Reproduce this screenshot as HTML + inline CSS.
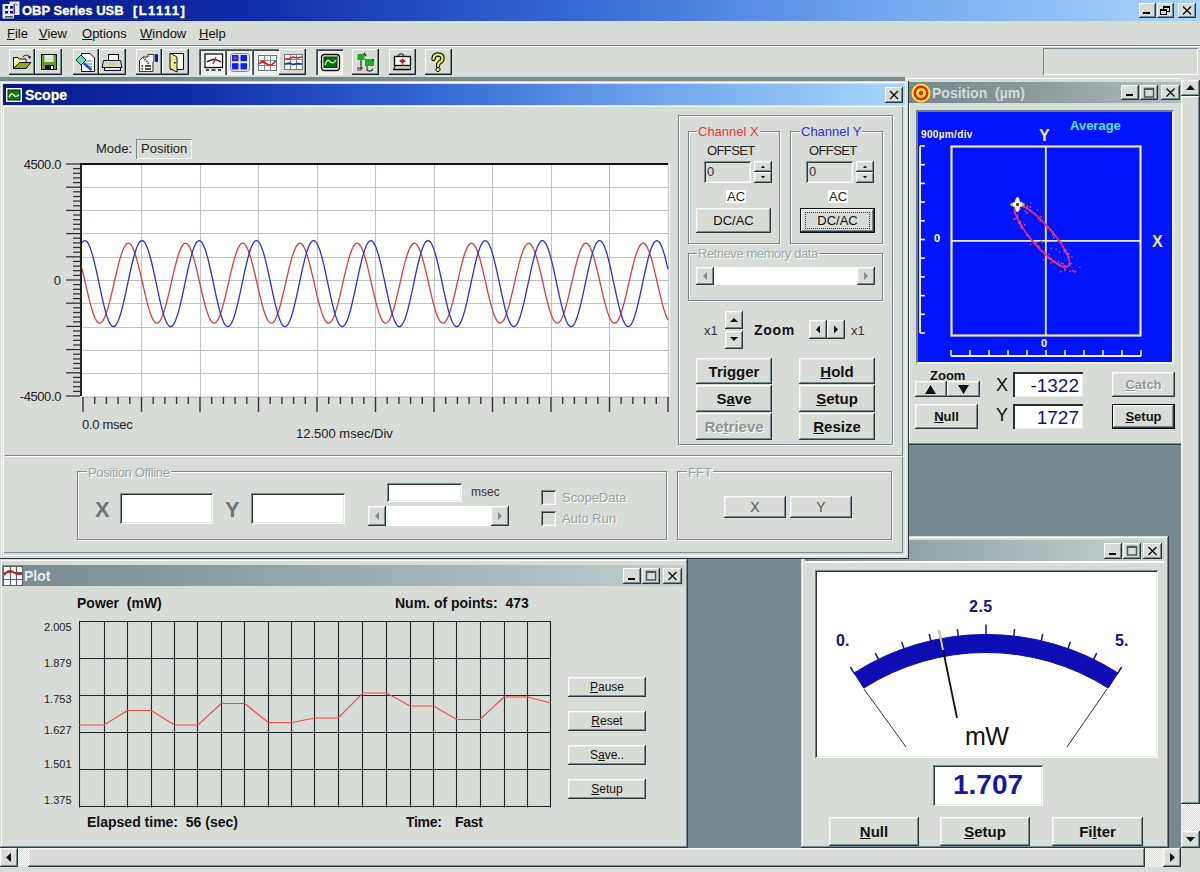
<!DOCTYPE html>
<html><head><meta charset="utf-8"><style>
*{box-sizing:border-box}
html,body{margin:0;padding:0}
body{width:1200px;height:872px;position:relative;overflow:hidden;background:#D8DCD6;font-family:"Liberation Sans",sans-serif;font-size:13px;color:#111}
.a{position:absolute}
.rb{position:absolute;background:#D8DCD6;box-shadow:inset -1px -1px #2C383C,inset 1px 1px #FAFBFA,inset -2px -2px #788A8F,inset 2px 2px #E6E8E4}
.sk{position:absolute;box-shadow:inset 1px 1px #788A8F,inset -1px -1px #FAFBFA,inset 2px 2px #2C383C,inset -2px -2px #E6E8E4}
.sk1{position:absolute;box-shadow:inset 1px 1px #788A8F,inset -1px -1px #FAFBFA}
.t{position:absolute;white-space:nowrap;line-height:1}
.tb{position:absolute;background:#D8DCD6;box-shadow:inset -1px -1px #2C383C,inset 1px 1px #FAFBFA,inset -2px -2px #788A8F}
.tb svg{position:absolute;left:0;top:0}
svg{overflow:visible}
u{text-decoration:underline;text-underline-offset:1px}
</style></head><body>
<div class="a" style="left:0px;top:0px;width:1200px;height:21px;background:linear-gradient(90deg,#0A1A8A 0%,#0E2CA8 20%,#3566D2 47%,#6FA4EC 72%,#A8D6FA 100%)"></div>
<svg class="a" style="left:0;top:0" width="22" height="21">
<rect x="9.5" y="1.5" width="10" height="13.5" fill="#EEE8F4"/><path d="M15 3 L18 6" stroke="#D89060" stroke-width="1.6"/><rect x="15" y="11" width="3" height="1.5" fill="#C8D8C0"/>
<rect x="2.5" y="4" width="11.5" height="14.5" fill="#E4E8F8"/><rect x="13.5" y="4" width="1.3" height="10" fill="#202A80"/>
<rect x="5" y="6" width="3" height="2.6" fill="#0A14B0"/><rect x="10" y="6" width="3" height="2.6" fill="#0A14B0"/>
<rect x="5" y="11" width="3" height="2.6" fill="#0A14B0"/><rect x="10" y="11" width="3" height="2.6" fill="#0A14B0"/>
<rect x="5" y="16" width="8" height="1.5" fill="#3E5A40"/></svg>
<div class="t" style="left:22px;top:4px;font-size:13px;color:#fff;font-weight:bold;-webkit-text-stroke:0.35px #fff">OBP Series USB</div>
<div class="t" style="left:133px;top:4px;font-size:13px;color:#fff;font-weight:bold;letter-spacing:1.4px;-webkit-text-stroke:0.35px #fff">[L1111]</div>
<div class="tb" style="left:1139px;top:3px;width:17px;height:15px"><svg width="17" height="15"><rect x="4" y="9" width="7" height="2" fill="#000"/></svg></div>
<div class="tb" style="left:1157px;top:3px;width:17px;height:15px"><svg width="17" height="15"><rect x="6.5" y="3.5" width="6" height="5" fill="none" stroke="#000"/><rect x="6" y="3" width="7" height="2" fill="#000"/><rect x="3.5" y="6.5" width="6" height="5" fill="#D8DCD6" stroke="#000"/><rect x="3" y="6" width="7" height="2" fill="#000"/></svg></div>
<div class="tb" style="left:1178px;top:3px;width:18px;height:15px"><svg width="18" height="15"><path d="M5.0 3.5 L13.0 11.5 M13.0 3.5 L5.0 11.5" stroke="#111" stroke-width="1.4"/></svg></div>
<div class="t" style="left:7px;top:27px;font-size:13px;color:#111;"><u>F</u>ile</div>
<div class="t" style="left:39px;top:27px;font-size:13px;color:#111;"><u>V</u>iew</div>
<div class="t" style="left:82px;top:27px;font-size:13px;color:#111;"><u>O</u>ptions</div>
<div class="t" style="left:140px;top:27px;font-size:13px;color:#111;"><u>W</u>indow</div>
<div class="t" style="left:199px;top:27px;font-size:13px;color:#111;"><u>H</u>elp</div>
<div class="a" style="left:0px;top:45px;width:1200px;height:1px;background:#788A8F"></div>
<div class="a" style="left:0px;top:46px;width:1200px;height:1px;background:#FAFBFA"></div>
<div class="sk1" style="left:1043px;top:48px;width:155px;height:27px;"></div>
<div class="a" style="left:0px;top:77px;width:1181px;height:771px;background:#778A90"></div>
<div class="a" style="left:9px;top:49px;width:26px;height:26px;background:#D8DCD6;box-shadow:inset -1px -1px #1A2428,inset -2px -2px #788A8F,inset 1px 1px #FAFBFA"></div>
<svg class="a" style="left:9px;top:49px" width="26" height="26" viewBox="0 0 26 26"><path d="M4.5 8.5 L9 8.5 L10 10 L17 10 L17 19.5 L4.5 19.5Z" fill="#F2F2A8" stroke="#111"/><path d="M4.5 19.5 L10.5 13.5 L22 13.5 L17 19.5Z" fill="#88A820" stroke="#111"/><path d="M14 8 Q17 4 20.5 8" stroke="#333" stroke-width="1.2" fill="none"/><path d="M22 7 L21 10 L19 8Z" fill="#111"/></svg>
<div class="a" style="left:35px;top:49px;width:27px;height:26px;background:#D8DCD6;box-shadow:inset -1px -1px #1A2428,inset -2px -2px #788A8F,inset 1px 1px #FAFBFA"></div>
<svg class="a" style="left:35px;top:49px" width="27" height="26" viewBox="0 0 27 26"><rect x="6.5" y="5.5" width="15" height="15" fill="#6E9A20" stroke="#111"/><rect x="9.5" y="6" width="9" height="7" fill="#E2E6E2"/><rect x="10" y="16" width="9" height="5" fill="#111"/><rect x="16" y="17" width="2" height="3" fill="#fff"/></svg>
<div class="a" style="left:73px;top:49px;width:26px;height:26px;background:#D8DCD6;box-shadow:inset -1px -1px #1A2428,inset -2px -2px #788A8F,inset 1px 1px #FAFBFA"></div>
<svg class="a" style="left:73px;top:49px" width="26" height="26" viewBox="0 0 26 26"><path d="M8.5 4.5 L17 4.5 L21.5 9 L21.5 22.5 L8.5 22.5Z" fill="#fff" stroke="#111"/><path d="M13 12 H19 M13 15 H19 M13 18 H19" stroke="#777"/><path d="M3 11 L8 6 L13 11 L8 16Z" fill="#60E0C4" stroke="#222"/><path d="M10.5 14 L18.5 21" stroke="#2050E0" stroke-width="2.8"/></svg>
<div class="a" style="left:99px;top:49px;width:27px;height:26px;background:#D8DCD6;box-shadow:inset -1px -1px #1A2428,inset -2px -2px #788A8F,inset 1px 1px #FAFBFA"></div>
<svg class="a" style="left:99px;top:49px" width="27" height="26" viewBox="0 0 27 26"><rect x="9.5" y="5.5" width="10" height="6" fill="#F4F4F4" stroke="#111"/><path d="M4.5 11.5 L21.5 11.5 L23 18.5 L3 18.5Z" fill="#D4D4D4" stroke="#111"/><rect x="5.5" y="18.5" width="16" height="3" fill="#E4E4E4" stroke="#111"/><path d="M10 15 H16" stroke="#D8D040" stroke-width="2"/></svg>
<div class="a" style="left:136px;top:49px;width:26px;height:26px;background:#D8DCD6;box-shadow:inset -1px -1px #1A2428,inset -2px -2px #788A8F,inset 1px 1px #FAFBFA"></div>
<svg class="a" style="left:136px;top:49px" width="26" height="26" viewBox="0 0 26 26"><path d="M3.5 11.5 L7 8 L12 8 L12 5.5 L18 5.5 L18 12 L17 13 L17 22.5 L3.5 22.5Z" fill="#F4F4F4" stroke="#333"/><path d="M7 8 L13 15" stroke="#555" stroke-width="2" stroke-dasharray="1.5 1"/><path d="M5.5 17 H7 M9 17 H15 M5.5 20 H7 M9 20 H15" stroke="#111" stroke-width="1.3"/><rect x="19" y="5" width="3" height="8" rx="1" fill="#1010D0"/></svg>
<div class="a" style="left:162px;top:49px;width:27px;height:26px;background:#D8DCD6;box-shadow:inset -1px -1px #1A2428,inset -2px -2px #788A8F,inset 1px 1px #FAFBFA"></div>
<svg class="a" style="left:162px;top:49px" width="27" height="26" viewBox="0 0 27 26"><path d="M8.5 4.5 L21.5 4.5 L21.5 20.5 L8.5 20.5Z" fill="#fff" stroke="#111"/><path d="M8 4 L15 8 L15 23 L8 19.5Z" fill="#E8EC88" stroke="#111"/><rect x="12" y="13" width="1.6" height="1.6" fill="#111"/></svg>
<div class="a" style="left:199px;top:49px;width:26px;height:26px;background:#EEF0EC;box-shadow:inset 1px 1px #5A6A6E,inset 2px 2px #3A4A4E,inset -1px -1px #FAFBFA"></div>
<svg class="a" style="left:199px;top:48px" width="26" height="26" viewBox="0 0 26 26"><rect x="6" y="6" width="17.5" height="13.5" fill="#fff" stroke="#111" stroke-width="1.3"/><path d="M8 14 Q15 9 22 14" stroke="#111" stroke-width="1.3" fill="none"/><path d="M14 16 L17 9" stroke="#E02020" stroke-width="1.4"/><path d="M7 22 H10 M12.5 22 H16.5 M19 22 H22" stroke="#111" stroke-width="1.6"/></svg>
<div class="a" style="left:225px;top:49px;width:27px;height:26px;background:#EEF0EC;box-shadow:inset 1px 1px #5A6A6E,inset 2px 2px #3A4A4E,inset -1px -1px #FAFBFA"></div>
<svg class="a" style="left:225px;top:48px" width="27" height="26" viewBox="0 0 27 26"><rect x="5.5" y="5.5" width="19" height="18" rx="3" fill="#E8ECFA" stroke="#7080E8"/><rect x="7" y="7" width="6.5" height="6.2" fill="#1020F0"/><rect x="15.5" y="7" width="6.5" height="6.2" fill="#1020F0"/><rect x="7" y="15.2" width="6.5" height="6.2" fill="#1020F0"/><rect x="15.5" y="15.2" width="6.5" height="6.2" fill="#1020F0"/><circle cx="10.2" cy="10.1" r="1.8" fill="#C03088"/></svg>
<div class="a" style="left:252px;top:49px;width:27px;height:26px;background:#EEF0EC;box-shadow:inset 1px 1px #5A6A6E,inset 2px 2px #3A4A4E,inset -1px -1px #FAFBFA"></div>
<svg class="a" style="left:252px;top:48px" width="27" height="26" viewBox="0 0 27 26"><rect x="6.5" y="7.5" width="18" height="15" fill="#F4F4F4" stroke="#6A7A78"/><path d="M6.5 12.5 H24.5 M6.5 17.5 H24.5 M12.5 7.5 V22.5 M18.5 7.5 V22.5" stroke="#7A8A88"/><path d="M6.5 16 L11 13 L15.5 16.5 L19.5 17 L24 13" stroke="#E01818" stroke-width="1.6" fill="none"/></svg>
<div class="a" style="left:279px;top:49px;width:27px;height:26px;background:#D8DCD6;box-shadow:inset -1px -1px #1A2428,inset -2px -2px #788A8F,inset 1px 1px #FAFBFA"></div>
<svg class="a" style="left:279px;top:49px" width="27" height="26" viewBox="0 0 27 26"><rect x="5.5" y="5.5" width="18" height="15" fill="#F4F4F4" stroke="#6A7A78"/><path d="M5.5 10.5 H23.5 M5.5 15.5 H23.5 M11.5 5.5 V20.5 M17.5 5.5 V20.5" stroke="#7A8A88"/><path d="M5.5 10 L10 10 L14 8 L18 9 L23 8" stroke="#E01818" stroke-width="1.6" fill="none"/><path d="M5.5 15 L10 14 L14 15.5 L18 14.5 L23 15" stroke="#1828E0" stroke-width="1.6" fill="none"/></svg>
<div class="a" style="left:316px;top:49px;width:27px;height:26px;background:#EEF0EC;box-shadow:inset 1px 1px #5A6A6E,inset 2px 2px #3A4A4E,inset -1px -1px #FAFBFA"></div>
<svg class="a" style="left:316px;top:48px" width="27" height="26" viewBox="0 0 27 26"><rect x="5.5" y="6.5" width="18" height="16" rx="3" fill="#F0F0F0" stroke="#111" stroke-width="1.3"/><rect x="8" y="9" width="13" height="10.5" fill="#087008" stroke="#043004"/><path d="M9 17 Q11 10 14 13.5 T20 12" stroke="#C8F0C8" stroke-width="1.3" fill="none"/></svg>
<div class="a" style="left:352px;top:49px;width:27px;height:26px;background:#D8DCD6;box-shadow:inset -1px -1px #1A2428,inset -2px -2px #788A8F,inset 1px 1px #FAFBFA"></div>
<svg class="a" style="left:352px;top:49px" width="27" height="26" viewBox="0 0 27 26"><rect x="5.5" y="5" width="7" height="6" fill="#18B018"/><rect x="13" y="10" width="9" height="7" fill="#18B018"/><path d="M9 11 V21 M5 19 H11 M15 17 V21 Q15 22 19 22 L21 20" stroke="#222" stroke-width="1.1" fill="none"/><path d="M5 21 H10" stroke="#E04020" stroke-width="1.2"/><path d="M12 4 L14 7" stroke="#222" stroke-width="1.4"/><path d="M20 10 L22 12" stroke="#222"/></svg>
<div class="a" style="left:389px;top:49px;width:27px;height:26px;background:#D8DCD6;box-shadow:inset -1px -1px #1A2428,inset -2px -2px #788A8F,inset 1px 1px #FAFBFA"></div>
<svg class="a" style="left:389px;top:49px" width="27" height="26" viewBox="0 0 27 26"><path d="M9 6.5 Q12 3 15 6.5" stroke="#222" stroke-width="1.2" fill="none"/><rect x="5.5" y="7.5" width="16" height="9" fill="#fff" stroke="#111" stroke-width="1.4"/><path d="M10 12 L13.5 9.5 L17 12 L13.5 14.5Z" fill="#E81010"/><path d="M13.5 14 V17" stroke="#E81010"/><path d="M4 20.5 H22" stroke="#111" stroke-width="1.6"/><path d="M6 17 L5 20 M21 17 L22 20" stroke="#111"/></svg>
<div class="a" style="left:425px;top:49px;width:27px;height:26px;background:#D8DCD6;box-shadow:inset -1px -1px #1A2428,inset -2px -2px #788A8F,inset 1px 1px #FAFBFA"></div>
<svg class="a" style="left:425px;top:49px" width="27" height="26" viewBox="0 0 27 26"><path d="M8.5 10 Q8.5 5.5 13 5.5 Q17.5 5.5 17.5 9.5 Q17.5 12 14.5 13.5 Q13 14.5 13 17" stroke="#111" stroke-width="4.4" fill="none" stroke-linecap="round"/><path d="M8.5 10 Q8.5 5.5 13 5.5 Q17.5 5.5 17.5 9.5 Q17.5 12 14.5 13.5 Q13 14.5 13 17" stroke="#E8EC40" stroke-width="2.2" fill="none" stroke-linecap="round"/><circle cx="13" cy="20.5" r="2.1" fill="#E8EC40" stroke="#111"/></svg>
<div class="a" style="left:801px;top:536px;width:368px;height:312px;background:#D8DCD6;box-shadow:inset -1px -1px #2C383C,inset 1px 1px #D8DCD6,inset -2px -2px #788A8F,inset 2px 2px #FAFBFA"></div>
<div class="a" style="left:805px;top:540px;width:359px;height:21px;background:linear-gradient(90deg,#788A8E 0%,#9AAAAE 40%,#C8D2D2 100%)"></div>
<div class="a" style="left:805px;top:561px;width:359px;height:2px;background:#FAFBFA"></div>
<div class="tb" style="left:1104px;top:543px;width:18px;height:16px"><svg width="18" height="16"><rect x="5" y="10" width="7" height="2" fill="#000"/></svg></div>
<div class="tb" style="left:1123px;top:543px;width:18px;height:16px"><svg width="18" height="16"><rect x="4.5" y="3.5" width="9" height="8.5" fill="none" stroke="#4A585C" stroke-width="1.5"/><rect x="4" y="3" width="10" height="2" fill="#4A585C"/></svg></div>
<div class="tb" style="left:1143px;top:543px;width:19px;height:16px"><svg width="19" height="16"><path d="M5.5 4.0 L13.5 12.0 M13.5 4.0 L5.5 12.0" stroke="#111" stroke-width="1.4"/></svg></div>
<div class="sk" style="left:815px;top:570px;width:343px;height:188px;background:#fff;"></div>
<svg class="a" style="left:0;top:0" width="1200" height="872"><path d="M854.1 672.9 A245.5 245.5 0 0 1 1117.9 672.9 L1108.2 688.1 A227.5 227.5 0 0 0 863.8 688.1Z" fill="#0E0EB4" stroke="#0E0EB4" stroke-width="1"/><line x1="855.2" y1="674.6" x2="850.3" y2="667.0" stroke="#1010A0" stroke-width="1.5"/><line x1="879.3" y1="661.1" x2="875.3" y2="653.1" stroke="#1010A0" stroke-width="1.5"/><line x1="904.7" y1="650.5" x2="901.7" y2="642.0" stroke="#1010A0" stroke-width="1.5"/><line x1="931.2" y1="642.7" x2="929.2" y2="634.0" stroke="#1010A0" stroke-width="1.5"/><line x1="958.4" y1="638.1" x2="957.4" y2="629.1" stroke="#1010A0" stroke-width="1.5"/><line x1="986.0" y1="636.5" x2="986.0" y2="624.5" stroke="#1010A0" stroke-width="1.5"/><line x1="1013.6" y1="638.1" x2="1014.6" y2="629.1" stroke="#1010A0" stroke-width="1.5"/><line x1="1040.8" y1="642.7" x2="1042.8" y2="634.0" stroke="#1010A0" stroke-width="1.5"/><line x1="1067.3" y1="650.5" x2="1070.3" y2="642.0" stroke="#1010A0" stroke-width="1.5"/><line x1="1092.7" y1="661.1" x2="1096.7" y2="653.1" stroke="#1010A0" stroke-width="1.5"/><line x1="1116.8" y1="674.6" x2="1121.7" y2="667.0" stroke="#1010A0" stroke-width="1.5"/><line x1="864" y1="689" x2="906" y2="747" stroke="#333" stroke-width="1"/><line x1="1107" y1="689" x2="1067" y2="747" stroke="#333" stroke-width="1"/><line x1="939" y1="630" x2="957" y2="718" stroke="#111" stroke-width="1.8"/><line x1="939" y1="630" x2="943" y2="650" stroke="#E8E080" stroke-width="1.8"/></svg>
<div class="t" style="left:969px;top:599px;font-size:16px;color:#10108C;font-weight:bold;letter-spacing:0.5px">2.5</div>
<div class="t" style="left:836px;top:633px;font-size:16px;color:#10108C;font-weight:bold;">0.</div>
<div class="t" style="left:1115px;top:633px;font-size:16px;color:#10108C;font-weight:bold;">5.</div>
<div class="t" style="left:965px;top:724px;font-size:25px;color:#111;letter-spacing:-0.5px">mW</div>
<div class="sk" style="left:933px;top:765px;width:110px;height:41px;background:#fff;"></div>
<div class="t" style="left:933px;top:771px;font-size:28px;color:#1818A0;font-weight:bold;width:110px;text-align:center">1.707</div>
<div class="rb" style="left:829px;top:817px;width:90px;height:29px;"></div><div class="t" style="left:829px;top:817px;width:90px;height:29px;display:flex;align-items:center;justify-content:center;font-size:15px;color:#111;font-weight:bold;"><u>N</u>ull</div>
<div class="rb" style="left:940px;top:817px;width:90px;height:29px;"></div><div class="t" style="left:940px;top:817px;width:90px;height:29px;display:flex;align-items:center;justify-content:center;font-size:15px;color:#111;font-weight:bold;"><u>S</u>etup</div>
<div class="rb" style="left:1052px;top:817px;width:91px;height:29px;"></div><div class="t" style="left:1052px;top:817px;width:91px;height:29px;display:flex;align-items:center;justify-content:center;font-size:15px;color:#111;font-weight:bold;">Fi<u>l</u>ter</div>
<div class="a" style="left:0px;top:559px;width:688px;height:289px;background:#D8DCD6;box-shadow:inset -1px -1px #2C383C,inset 1px 1px #D8DCD6,inset -2px -2px #788A8F,inset 2px 2px #FAFBFA"></div>
<div class="a" style="left:2px;top:565px;width:682px;height:21px;background:linear-gradient(90deg,#788A8E 0%,#9AAAAE 50%,#C2CCCC 100%)"></div>
<svg class="a" style="left:3px;top:566px" width="20" height="20"><rect x="0.5" y="0.5" width="19" height="19" fill="#fff" stroke="#5A6266"/><path d="M0 6.5 H20 M0 13.5 H20 M7.5 0 V20 M13.5 0 V20" stroke="#5A6266" stroke-width="1.2"/><path d="M1 9 Q6 3 10 6 Q14 9 19 7.5" stroke="#D01818" stroke-width="2" fill="none"/></svg>
<div class="t" style="left:24px;top:569px;font-size:14px;color:#E8ECEA;font-weight:bold;">Plot</div>
<div class="tb" style="left:623px;top:568px;width:18px;height:16px"><svg width="18" height="16"><rect x="5" y="10" width="7" height="2" fill="#000"/></svg></div>
<div class="tb" style="left:642px;top:568px;width:18px;height:16px"><svg width="18" height="16"><rect x="4.5" y="3.5" width="9" height="8.5" fill="none" stroke="#4A585C" stroke-width="1.5"/><rect x="4" y="3" width="10" height="2" fill="#4A585C"/></svg></div>
<div class="tb" style="left:663px;top:568px;width:19px;height:16px"><svg width="19" height="16"><path d="M5.5 4.0 L13.5 12.0 M13.5 4.0 L5.5 12.0" stroke="#111" stroke-width="1.4"/></svg></div>
<div class="t" style="left:77px;top:596px;font-size:14px;color:#111;font-weight:bold;">Power &nbsp;(mW)</div>
<div class="t" style="left:395px;top:596px;font-size:14px;color:#111;font-weight:bold;">Num. of points: &nbsp;473</div>
<svg class="a" style="left:0;top:0" width="700" height="860"><line x1="79.5" y1="621.5" x2="79.5" y2="807.5" stroke="#1E2428" stroke-width="1.1"/><line x1="104.5" y1="621.5" x2="104.5" y2="807.5" stroke="#1E2428" stroke-width="1.1"/><line x1="127.5" y1="621.5" x2="127.5" y2="807.5" stroke="#1E2428" stroke-width="1.1"/><line x1="151.5" y1="621.5" x2="151.5" y2="807.5" stroke="#1E2428" stroke-width="1.1"/><line x1="174.5" y1="621.5" x2="174.5" y2="807.5" stroke="#1E2428" stroke-width="1.1"/><line x1="197.5" y1="621.5" x2="197.5" y2="807.5" stroke="#1E2428" stroke-width="1.1"/><line x1="221.5" y1="621.5" x2="221.5" y2="807.5" stroke="#1E2428" stroke-width="1.1"/><line x1="244.5" y1="621.5" x2="244.5" y2="807.5" stroke="#1E2428" stroke-width="1.1"/><line x1="268.5" y1="621.5" x2="268.5" y2="807.5" stroke="#1E2428" stroke-width="1.1"/><line x1="291.5" y1="621.5" x2="291.5" y2="807.5" stroke="#1E2428" stroke-width="1.1"/><line x1="314.5" y1="621.5" x2="314.5" y2="807.5" stroke="#1E2428" stroke-width="1.1"/><line x1="338.5" y1="621.5" x2="338.5" y2="807.5" stroke="#1E2428" stroke-width="1.1"/><line x1="362.5" y1="621.5" x2="362.5" y2="807.5" stroke="#1E2428" stroke-width="1.1"/><line x1="386.5" y1="621.5" x2="386.5" y2="807.5" stroke="#1E2428" stroke-width="1.1"/><line x1="410.5" y1="621.5" x2="410.5" y2="807.5" stroke="#1E2428" stroke-width="1.1"/><line x1="433.5" y1="621.5" x2="433.5" y2="807.5" stroke="#1E2428" stroke-width="1.1"/><line x1="456.5" y1="621.5" x2="456.5" y2="807.5" stroke="#1E2428" stroke-width="1.1"/><line x1="480.5" y1="621.5" x2="480.5" y2="807.5" stroke="#1E2428" stroke-width="1.1"/><line x1="504.5" y1="621.5" x2="504.5" y2="807.5" stroke="#1E2428" stroke-width="1.1"/><line x1="527.5" y1="621.5" x2="527.5" y2="807.5" stroke="#1E2428" stroke-width="1.1"/><line x1="550.5" y1="621.5" x2="550.5" y2="807.5" stroke="#1E2428" stroke-width="1.1"/><line x1="79" y1="621.5" x2="551" y2="621.5" stroke="#1E2428" stroke-width="1.1"/><line x1="79" y1="658.5" x2="551" y2="658.5" stroke="#1E2428" stroke-width="1.1"/><line x1="79" y1="695.5" x2="551" y2="695.5" stroke="#1E2428" stroke-width="1.1"/><line x1="79" y1="732.5" x2="551" y2="732.5" stroke="#1E2428" stroke-width="1.1"/><line x1="79" y1="769.5" x2="551" y2="769.5" stroke="#1E2428" stroke-width="1.1"/><line x1="79" y1="806.5" x2="551" y2="806.5" stroke="#1E2428" stroke-width="1.1"/><polyline points="79.2,725 104.0,725 127.5,710.5 151.2,710.5 174.5,725 197.9,725 221.2,703.5 244.8,703.5 268.1,722.5 291.5,722.5 314.8,718 338.2,718 363.0,693 386.5,693 410.1,706 433.5,706 456.9,719.5 480.0,719.5 504.0,697 527.5,697 550.5,703" fill="none" stroke="#F04848" stroke-width="1.2"/></svg>
<div class="t" style="left:44px;top:622px;font-size:11px;color:#222;">2.005</div>
<div class="t" style="left:44px;top:658px;font-size:11px;color:#222;">1.879</div>
<div class="t" style="left:44px;top:694px;font-size:11px;color:#222;">1.753</div>
<div class="t" style="left:44px;top:725px;font-size:11px;color:#222;">1.627</div>
<div class="t" style="left:44px;top:759px;font-size:11px;color:#222;">1.501</div>
<div class="t" style="left:44px;top:795px;font-size:11px;color:#222;">1.375</div>
<div class="t" style="left:87px;top:815px;font-size:14px;color:#111;font-weight:bold;">Elapsed time: &nbsp;56 (sec)</div>
<div class="t" style="left:406px;top:815px;font-size:14px;color:#111;font-weight:bold;letter-spacing:-0.3px">Time:</div>
<div class="t" style="left:455px;top:815px;font-size:14px;color:#111;font-weight:bold;letter-spacing:-0.3px">Fast</div>
<div class="rb" style="left:568px;top:677px;width:78px;height:20px;"></div><div class="t" style="left:568px;top:677px;width:78px;height:20px;display:flex;align-items:center;justify-content:center;font-size:12px;color:#111;"><u>P</u>ause</div>
<div class="rb" style="left:568px;top:711px;width:78px;height:20px;"></div><div class="t" style="left:568px;top:711px;width:78px;height:20px;display:flex;align-items:center;justify-content:center;font-size:12px;color:#111;"><u>R</u>eset</div>
<div class="rb" style="left:568px;top:745px;width:78px;height:20px;"></div><div class="t" style="left:568px;top:745px;width:78px;height:20px;display:flex;align-items:center;justify-content:center;font-size:12px;color:#111;">S<u>a</u>ve..</div>
<div class="rb" style="left:568px;top:779px;width:78px;height:20px;"></div><div class="t" style="left:568px;top:779px;width:78px;height:20px;display:flex;align-items:center;justify-content:center;font-size:12px;color:#111;"><u>S</u>etup</div>
<div class="a" style="left:905px;top:77px;width:290px;height:368px;background:#D8DCD6;box-shadow:inset -1px -1px #2C383C,inset 1px 1px #D8DCD6,inset -2px -2px #788A8F,inset 2px 2px #FAFBFA"></div>
<div class="a" style="left:909px;top:104px;width:1px;height:338px;background:#FAFBFA"></div>
<div class="a" style="left:909px;top:82px;width:272px;height:21px;background:linear-gradient(90deg,#74868A 0%,#8A9A9C 45%,#B2BEBE 100%)"></div>
<svg class="a" style="left:911px;top:83px" width="20" height="20"><circle cx="10" cy="10" r="9.5" fill="#F8E830"/><circle cx="10" cy="10" r="7.5" fill="#E82010"/><circle cx="10" cy="10" r="5" fill="#F8E830"/><circle cx="10" cy="10" r="2.2" fill="#E82010"/></svg>
<div class="t" style="left:932px;top:86px;font-size:14px;color:#D6DCDA;font-weight:bold;">Position &nbsp;(µm)</div>
<div class="tb" style="left:1121px;top:85px;width:18px;height:15px"><svg width="18" height="15"><rect x="5" y="9" width="7" height="2" fill="#000"/></svg></div>
<div class="tb" style="left:1140px;top:85px;width:18px;height:15px"><svg width="18" height="15"><rect x="4.5" y="3.5" width="9" height="8.5" fill="none" stroke="#4A585C" stroke-width="1.5"/><rect x="4" y="3" width="10" height="2" fill="#4A585C"/></svg></div>
<div class="tb" style="left:1161px;top:85px;width:19px;height:15px"><svg width="19" height="15"><path d="M5.5 3.5 L13.5 11.5 M13.5 3.5 L5.5 11.5" stroke="#111" stroke-width="1.4"/></svg></div>
<div class="a" style="left:916px;top:110px;width:258px;height:254px;background:#0014FE;border:2px solid #6C7C80;border-right-color:#F0F2F0;border-bottom-color:#F0F2F0"></div>
<svg class="a" style="left:0;top:0" width="1200" height="450"><rect x="951.5" y="146.5" width="189" height="189" fill="none" stroke="#F0E890" stroke-width="2.2"/><line x1="1045.8" y1="147" x2="1045.8" y2="335" stroke="#EEEEB8" stroke-width="1.8"/><line x1="952" y1="240.8" x2="1140" y2="240.8" stroke="#EEEEB8" stroke-width="1.8"/><line x1="920" y1="146" x2="920" y2="333" stroke="#F0E890" stroke-width="2"/><line x1="920" y1="146.0" x2="925" y2="146.0" stroke="#F0F0F0" stroke-width="1.6"/><line x1="920" y1="164.7" x2="925" y2="164.7" stroke="#F0F0F0" stroke-width="1.6"/><line x1="920" y1="183.4" x2="925" y2="183.4" stroke="#F0F0F0" stroke-width="1.6"/><line x1="920" y1="202.1" x2="925" y2="202.1" stroke="#F0F0F0" stroke-width="1.6"/><line x1="920" y1="220.8" x2="925" y2="220.8" stroke="#F0F0F0" stroke-width="1.6"/><line x1="920" y1="239.5" x2="925" y2="239.5" stroke="#F0F0F0" stroke-width="1.6"/><line x1="920" y1="258.2" x2="925" y2="258.2" stroke="#F0F0F0" stroke-width="1.6"/><line x1="920" y1="276.9" x2="925" y2="276.9" stroke="#F0F0F0" stroke-width="1.6"/><line x1="920" y1="295.6" x2="925" y2="295.6" stroke="#F0F0F0" stroke-width="1.6"/><line x1="920" y1="314.3" x2="925" y2="314.3" stroke="#F0F0F0" stroke-width="1.6"/><line x1="920" y1="333.0" x2="925" y2="333.0" stroke="#F0F0F0" stroke-width="1.6"/><line x1="951" y1="356" x2="1141" y2="356" stroke="#F0F0E0" stroke-width="2"/><line x1="951.0" y1="350" x2="951.0" y2="356" stroke="#F0F0E0" stroke-width="1.6"/><line x1="970.0" y1="350" x2="970.0" y2="356" stroke="#F0F0E0" stroke-width="1.6"/><line x1="989.0" y1="350" x2="989.0" y2="356" stroke="#F0F0E0" stroke-width="1.6"/><line x1="1008.0" y1="350" x2="1008.0" y2="356" stroke="#F0F0E0" stroke-width="1.6"/><line x1="1027.0" y1="350" x2="1027.0" y2="356" stroke="#F0F0E0" stroke-width="1.6"/><line x1="1046.0" y1="350" x2="1046.0" y2="356" stroke="#F0F0E0" stroke-width="1.6"/><line x1="1065.0" y1="350" x2="1065.0" y2="356" stroke="#F0F0E0" stroke-width="1.6"/><line x1="1084.0" y1="350" x2="1084.0" y2="356" stroke="#F0F0E0" stroke-width="1.6"/><line x1="1103.0" y1="350" x2="1103.0" y2="356" stroke="#F0F0E0" stroke-width="1.6"/><line x1="1122.0" y1="350" x2="1122.0" y2="356" stroke="#F0F0E0" stroke-width="1.6"/><line x1="1141.0" y1="350" x2="1141.0" y2="356" stroke="#F0F0E0" stroke-width="1.6"/><ellipse cx="1042" cy="236" rx="40" ry="10.5" transform="rotate(49 1042 236)" fill="none" stroke="#E03068" stroke-width="1.8"/><rect x="1020.5" y="227.1" width="1.6" height="1.6" fill="#E8407A"/><rect x="1064.1" y="269.6" width="1.6" height="1.6" fill="#E8407A"/><rect x="1018.0" y="205.1" width="1.6" height="1.6" fill="#E8407A"/><rect x="1014.6" y="203.8" width="1.6" height="1.6" fill="#E8407A"/><rect x="1063.9" y="264.9" width="1.6" height="1.6" fill="#E8407A"/><rect x="1059.3" y="264.9" width="1.6" height="1.6" fill="#E8407A"/><rect x="1013.5" y="210.8" width="1.6" height="1.6" fill="#E8407A"/><rect x="1038.0" y="246.4" width="1.6" height="1.6" fill="#E8407A"/><rect x="1026.7" y="205.4" width="1.6" height="1.6" fill="#E8407A"/><rect x="1016.8" y="216.3" width="1.6" height="1.6" fill="#E8407A"/><rect x="1074.5" y="270.6" width="1.6" height="1.6" fill="#E8407A"/><rect x="1026.1" y="234.4" width="1.6" height="1.6" fill="#E8407A"/><rect x="1051.9" y="261.1" width="1.6" height="1.6" fill="#E8407A"/><rect x="1060.3" y="241.5" width="1.6" height="1.6" fill="#E8407A"/><rect x="1044.5" y="251.3" width="1.6" height="1.6" fill="#E8407A"/><rect x="1019.3" y="220.5" width="1.6" height="1.6" fill="#E8407A"/><rect x="1017.6" y="203.1" width="1.6" height="1.6" fill="#E8407A"/><rect x="1040.7" y="250.3" width="1.6" height="1.6" fill="#E8407A"/><rect x="1037.6" y="218.0" width="1.6" height="1.6" fill="#E8407A"/><rect x="1021.9" y="204.4" width="1.6" height="1.6" fill="#E8407A"/><rect x="1015.6" y="210.1" width="1.6" height="1.6" fill="#E8407A"/><rect x="1040.3" y="215.9" width="1.6" height="1.6" fill="#E8407A"/><rect x="1035.2" y="242.2" width="1.6" height="1.6" fill="#E8407A"/><rect x="1063.8" y="250.6" width="1.6" height="1.6" fill="#E8407A"/><rect x="1045.3" y="225.3" width="1.6" height="1.6" fill="#E8407A"/><rect x="1059.8" y="270.9" width="1.6" height="1.6" fill="#E8407A"/><rect x="1014.4" y="212.2" width="1.6" height="1.6" fill="#E8407A"/><rect x="1016.3" y="207.6" width="1.6" height="1.6" fill="#E8407A"/><rect x="1062.4" y="263.1" width="1.6" height="1.6" fill="#E8407A"/><rect x="1024.7" y="210.4" width="1.6" height="1.6" fill="#E8407A"/><rect x="1063.7" y="250.6" width="1.6" height="1.6" fill="#E8407A"/><rect x="1020.9" y="201.4" width="1.6" height="1.6" fill="#E8407A"/><rect x="1026.3" y="212.0" width="1.6" height="1.6" fill="#E8407A"/><rect x="1070.3" y="262.9" width="1.6" height="1.6" fill="#E8407A"/><rect x="1014.6" y="207.2" width="1.6" height="1.6" fill="#E8407A"/><rect x="1040.9" y="220.1" width="1.6" height="1.6" fill="#E8407A"/><rect x="1029.6" y="206.2" width="1.6" height="1.6" fill="#E8407A"/><rect x="1027.9" y="235.4" width="1.6" height="1.6" fill="#E8407A"/><rect x="1016.5" y="217.2" width="1.6" height="1.6" fill="#E8407A"/><rect x="1014.4" y="208.1" width="1.6" height="1.6" fill="#E8407A"/><rect x="1047.4" y="256.7" width="1.6" height="1.6" fill="#E8407A"/><rect x="1052.4" y="231.7" width="1.6" height="1.6" fill="#E8407A"/><rect x="1053.5" y="261.0" width="1.6" height="1.6" fill="#E8407A"/><rect x="1067.9" y="253.0" width="1.6" height="1.6" fill="#E8407A"/><rect x="1057.6" y="260.7" width="1.6" height="1.6" fill="#E8407A"/><rect x="1067.2" y="253.9" width="1.6" height="1.6" fill="#E8407A"/><rect x="1060.6" y="242.1" width="1.6" height="1.6" fill="#E8407A"/><rect x="1016.5" y="214.3" width="1.6" height="1.6" fill="#E8407A"/><rect x="1013.4" y="218.4" width="1.6" height="1.6" fill="#E8407A"/><rect x="1048.3" y="253.7" width="1.6" height="1.6" fill="#E8407A"/><rect x="1045.9" y="255.1" width="1.6" height="1.6" fill="#E8407A"/><rect x="1012.0" y="203.2" width="1.6" height="1.6" fill="#E8407A"/><rect x="1023.2" y="206.0" width="1.6" height="1.6" fill="#E8407A"/><rect x="1014.1" y="212.0" width="1.6" height="1.6" fill="#E8407A"/><rect x="1024.0" y="223.9" width="1.6" height="1.6" fill="#E8407A"/><rect x="1039.3" y="219.9" width="1.6" height="1.6" fill="#E8407A"/><rect x="1019.2" y="208.6" width="1.6" height="1.6" fill="#E8407A"/><rect x="1060.6" y="262.2" width="1.6" height="1.6" fill="#E8407A"/><rect x="1068.2" y="256.4" width="1.6" height="1.6" fill="#E8407A"/><rect x="1052.9" y="237.0" width="1.6" height="1.6" fill="#E8407A"/><rect x="1016.9" y="216.8" width="1.6" height="1.6" fill="#E8407A"/><rect x="1029.3" y="209.1" width="1.6" height="1.6" fill="#E8407A"/><rect x="1064.0" y="268.0" width="1.6" height="1.6" fill="#E8407A"/><rect x="1048.4" y="257.6" width="1.6" height="1.6" fill="#E8407A"/><rect x="1020.4" y="224.8" width="1.6" height="1.6" fill="#E8407A"/><rect x="1050.0" y="258.4" width="1.6" height="1.6" fill="#E8407A"/><rect x="1057.3" y="263.1" width="1.6" height="1.6" fill="#E8407A"/><rect x="1065.8" y="251.9" width="1.6" height="1.6" fill="#E8407A"/><rect x="1025.8" y="206.4" width="1.6" height="1.6" fill="#E8407A"/><rect x="1018.1" y="222.6" width="1.6" height="1.6" fill="#E8407A"/><rect x="1014.1" y="218.1" width="1.6" height="1.6" fill="#E8407A"/><rect x="1072.1" y="269.9" width="1.6" height="1.6" fill="#E8407A"/><rect x="1015.3" y="208.6" width="1.6" height="1.6" fill="#E8407A"/><rect x="1057.6" y="263.6" width="1.6" height="1.6" fill="#E8407A"/><rect x="1020.6" y="224.6" width="1.6" height="1.6" fill="#E8407A"/><rect x="1049.9" y="261.9" width="1.6" height="1.6" fill="#E8407A"/><rect x="1069.5" y="270.4" width="1.6" height="1.6" fill="#E8407A"/><rect x="1050.3" y="257.9" width="1.6" height="1.6" fill="#E8407A"/><rect x="1014.7" y="199.8" width="1.6" height="1.6" fill="#E8407A"/><rect x="1068.9" y="264.9" width="1.6" height="1.6" fill="#E8407A"/><rect x="1063.6" y="249.3" width="1.6" height="1.6" fill="#E8407A"/><rect x="1019.8" y="221.4" width="1.6" height="1.6" fill="#E8407A"/><rect x="1047.5" y="256.6" width="1.6" height="1.6" fill="#E8407A"/><rect x="1051.9" y="234.1" width="1.6" height="1.6" fill="#E8407A"/><rect x="1020.9" y="226.4" width="1.6" height="1.6" fill="#E8407A"/><rect x="1073.9" y="271.0" width="1.6" height="1.6" fill="#E8407A"/><rect x="1065.0" y="248.8" width="1.6" height="1.6" fill="#E8407A"/><rect x="1046.1" y="228.2" width="1.6" height="1.6" fill="#E8407A"/><rect x="1037.6" y="245.2" width="1.6" height="1.6" fill="#E8407A"/><rect x="1065.3" y="265.8" width="1.6" height="1.6" fill="#E8407A"/><rect x="1050.6" y="247.5" width="1.5" height="1.5" fill="#C84080"/><rect x="1029.8" y="243.9" width="1.5" height="1.5" fill="#C84080"/><rect x="1058.6" y="251.3" width="1.5" height="1.5" fill="#C84080"/><rect x="1079.1" y="266.6" width="1.5" height="1.5" fill="#C84080"/><rect x="1055.5" y="248.4" width="1.5" height="1.5" fill="#C84080"/><rect x="1039.9" y="240.7" width="1.5" height="1.5" fill="#C84080"/><rect x="1041.3" y="241.3" width="1.5" height="1.5" fill="#C84080"/><rect x="1030.1" y="202.2" width="1.5" height="1.5" fill="#C84080"/><rect x="1057.1" y="240.6" width="1.5" height="1.5" fill="#C84080"/><rect x="1036.7" y="209.1" width="1.5" height="1.5" fill="#C84080"/><rect x="1056.1" y="262.9" width="1.5" height="1.5" fill="#C84080"/><rect x="1071.1" y="256.2" width="1.5" height="1.5" fill="#C84080"/><rect x="1049.5" y="229.5" width="1.5" height="1.5" fill="#C84080"/><rect x="1042.5" y="259.1" width="1.5" height="1.5" fill="#C84080"/><g transform="translate(1017.5 204.5)"><ellipse cx="0" cy="0" rx="7.5" ry="2.4" fill="#90E060"/><ellipse cx="0" cy="0" rx="2.6" ry="7.5" fill="#FFFCE8"/><rect x="-4.5" y="-2" width="9" height="4" fill="#FFFCE8"/><rect x="-1.5" y="-1.5" width="3" height="3" fill="#D02020"/></g></svg>
<div class="t" style="left:921px;top:130px;font-size:10px;color:#F4F4F4;font-weight:bold;letter-spacing:0.35px">900µm/div</div>
<div class="t" style="left:1070px;top:119px;font-size:13px;color:#60E0FF;font-weight:bold;">Average</div>
<div class="t" style="left:1039px;top:128px;font-size:16px;color:#F0E880;font-weight:bold;">Y</div>
<div class="t" style="left:1152px;top:234px;font-size:16px;color:#F0E880;font-weight:bold;">X</div>
<div class="t" style="left:934px;top:233px;font-size:11px;color:#fff;font-weight:bold;">0</div>
<div class="t" style="left:1041px;top:338px;font-size:11px;color:#fff;font-weight:bold;">0</div>
<div class="t" style="left:930px;top:369px;font-size:13px;color:#111;font-weight:bold;">Zoom</div>
<div class="rb" style="left:915px;top:381px;width:32px;height:16px;"></div>
<div class="rb" style="left:947px;top:381px;width:33px;height:16px;"></div>
<svg class="a" style="left:915px;top:381px" width="65" height="16"><path d="M10 13 L21 13 L15.5 4Z M43 4 L54 4 L48.5 13Z" fill="#111"/></svg>
<div class="rb" style="left:915px;top:404px;width:63px;height:25px;"></div><div class="t" style="left:915px;top:404px;width:63px;height:25px;display:flex;align-items:center;justify-content:center;font-size:13px;color:#111;font-weight:bold;"><u>N</u>ull</div>
<div class="t" style="left:996px;top:376px;font-size:18px;color:#111;">X</div>
<div class="a" style="left:1013px;top:372px;width:70px;height:25px;background:#fff;box-shadow:inset 2px 2px #2A3034,inset -1px -1px #E8ECE8"></div>
<div class="t" style="left:1013px;top:376px;font-size:19px;color:#14147A;width:66px;text-align:right">-1322</div>
<div class="t" style="left:996px;top:406px;font-size:18px;color:#111;">Y</div>
<div class="a" style="left:1013px;top:404px;width:70px;height:25px;background:#fff;box-shadow:inset 2px 2px #2A3034,inset -1px -1px #E8ECE8"></div>
<div class="t" style="left:1013px;top:408px;font-size:19px;color:#14147A;width:66px;text-align:right">1727</div>
<div class="rb" style="left:1112px;top:372px;width:63px;height:25px;"></div><div class="t" style="left:1112px;top:372px;width:63px;height:25px;display:flex;align-items:center;justify-content:center;font-size:13px;color:#8E9898;font-weight:bold;text-shadow:1px 1px #fff"><u>C</u>atch</div>
<div class="a" style="left:1112px;top:404px;width:63px;height:25px;background:#D8DCD6;border:1px solid #111;box-shadow:inset -1px -1px #2C383C,inset 1px 1px #FAFBFA,inset -2px -2px #788A8F,inset 2px 2px #E6E8E4"></div><div class="t" style="left:1112px;top:404px;width:63px;height:25px;display:flex;align-items:center;justify-content:center;font-size:13px;color:#111;font-weight:bold;"><u>S</u>etup</div>
<div class="a" style="left:0px;top:81px;width:909px;height:478px;background:#D8DCD6;box-shadow:inset -1px -1px #2C383C,inset 1px 1px #D8DCD6,inset -2px -2px #788A8F,inset 2px 2px #FAFBFA"></div>
<div class="a" style="left:907px;top:81px;width:1px;height:477px;background:#D8DCD6"></div>
<div class="a" style="left:0px;top:557px;width:908px;height:1px;background:#D8DCD6"></div>
<div class="a" style="left:902px;top:106px;width:1px;height:447px;background:#788A8F"></div>
<div class="a" style="left:3px;top:552px;width:900px;height:1px;background:#788A8F"></div>
<div class="a" style="left:905px;top:84px;width:1px;height:472px;background:#FAFBFA"></div>
<div class="a" style="left:3px;top:555px;width:903px;height:1px;background:#FAFBFA"></div>
<div class="a" style="left:3px;top:84px;width:902px;height:21px;background:linear-gradient(90deg,#0A1A8A 0%,#0E2CA8 20%,#3566D2 47%,#6FA4EC 72%,#A8D6FA 100%)"></div>
<svg class="a" style="left:6px;top:88px" width="16" height="14"><rect x="0.5" y="0.5" width="15" height="13" fill="#E8F0E8" stroke="#F4F8F4"/><rect x="2" y="2" width="12" height="10" fill="#127A12" stroke="#063006"/><path d="M3 9.5 Q5 4 7.5 7 T13 6.5" stroke="#D8F8D8" stroke-width="1.3" fill="none"/></svg>
<div class="t" style="left:25px;top:88px;font-size:14px;color:#fff;font-weight:bold;-webkit-text-stroke:0.3px #fff">Scope</div>
<div class="tb" style="left:885px;top:87px;width:18px;height:16px"><svg width="18" height="16"><path d="M5.0 4.0 L13.0 12.0 M13.0 4.0 L5.0 12.0" stroke="#111" stroke-width="1.4"/></svg></div>
<div class="a" style="left:3px;top:106px;width:902px;height:1px;background:#FAFBFA"></div>
<div class="a" style="left:3px;top:106px;width:1px;height:448px;background:#FAFBFA"></div>
<div class="a" style="left:5px;top:455px;width:898px;height:1px;background:#788A8F"></div>
<div class="a" style="left:5px;top:456px;width:898px;height:1px;background:#FAFBFA"></div>
<div class="t" style="left:96px;top:142px;font-size:13px;color:#222;">Mode:</div>
<div class="sk1" style="left:136px;top:139px;width:56px;height:20px;"></div>
<div class="t" style="left:141px;top:142px;font-size:13px;color:#222;">Position</div>
<svg class="a" style="left:0;top:0" width="908" height="460"><rect x="81" y="164" width="589" height="232" fill="#fff"/><line x1="81" y1="187.5" x2="669" y2="187.5" stroke="#BEC2CC" stroke-width="1.1"/><line x1="81" y1="210.5" x2="669" y2="210.5" stroke="#BEC2CC" stroke-width="1.1"/><line x1="81" y1="233.5" x2="669" y2="233.5" stroke="#BEC2CC" stroke-width="1.1"/><line x1="81" y1="257.5" x2="669" y2="257.5" stroke="#BEC2CC" stroke-width="1.1"/><line x1="81" y1="280.5" x2="669" y2="280.5" stroke="#BEC2CC" stroke-width="1.1"/><line x1="81" y1="303.5" x2="669" y2="303.5" stroke="#BEC2CC" stroke-width="1.1"/><line x1="81" y1="327.5" x2="669" y2="327.5" stroke="#BEC2CC" stroke-width="1.1"/><line x1="81" y1="350.5" x2="669" y2="350.5" stroke="#BEC2CC" stroke-width="1.1"/><line x1="81" y1="373.5" x2="669" y2="373.5" stroke="#BEC2CC" stroke-width="1.1"/><line x1="81" y1="397.5" x2="669" y2="397.5" stroke="#BEC2CC" stroke-width="1.1"/><line x1="141.5" y1="164" x2="141.5" y2="396" stroke="#BEC2CC" stroke-width="1.1"/><line x1="200.5" y1="164" x2="200.5" y2="396" stroke="#BEC2CC" stroke-width="1.1"/><line x1="258.5" y1="164" x2="258.5" y2="396" stroke="#BEC2CC" stroke-width="1.1"/><line x1="317.5" y1="164" x2="317.5" y2="396" stroke="#BEC2CC" stroke-width="1.1"/><line x1="375.5" y1="164" x2="375.5" y2="396" stroke="#BEC2CC" stroke-width="1.1"/><line x1="434.5" y1="164" x2="434.5" y2="396" stroke="#BEC2CC" stroke-width="1.1"/><line x1="492.5" y1="164" x2="492.5" y2="396" stroke="#BEC2CC" stroke-width="1.1"/><line x1="551.5" y1="164" x2="551.5" y2="396" stroke="#BEC2CC" stroke-width="1.1"/><line x1="609.5" y1="164" x2="609.5" y2="396" stroke="#BEC2CC" stroke-width="1.1"/><line x1="668.5" y1="164" x2="668.5" y2="396" stroke="#BEC2CC" stroke-width="1.1"/><polyline points="82.0,268.6 83.0,272.8 84.0,277.1 85.0,281.4 86.0,285.8 87.0,290.2 88.0,294.5 89.0,298.6 90.0,302.6 91.0,306.3 92.0,309.7 93.0,312.8 94.0,315.6 95.0,318.0 96.0,319.9 97.0,321.5 98.0,322.5 99.0,323.1 100.0,323.2 101.0,322.8 102.0,321.9 103.0,320.6 104.0,318.8 105.0,316.6 106.0,314.0 107.0,311.0 108.0,307.7 109.0,304.1 110.0,300.2 111.0,296.1 112.0,291.9 113.0,287.6 114.0,283.2 115.0,278.8 116.0,274.5 117.0,270.3 118.0,266.2 119.0,262.3 120.0,258.7 121.0,255.4 122.0,252.4 123.0,249.8 124.0,247.6 125.0,245.8 126.0,244.5 127.0,243.6 128.0,243.2 129.0,243.3 130.0,243.9 131.0,244.9 132.0,246.5 133.0,248.4 134.0,250.8 135.0,253.6 136.0,256.7 137.0,260.1 138.0,263.8 139.0,267.8 140.0,271.9 141.0,276.2 142.0,280.6 143.0,285.0 144.0,289.3 145.0,293.6 146.0,297.8 147.0,301.8 148.0,305.6 149.0,309.1 150.0,312.3 151.0,315.1 152.0,317.5 153.0,319.6 154.0,321.2 155.0,322.3 156.0,323.0 157.0,323.2 158.0,322.9 159.0,322.1 160.0,320.9 161.0,319.2 162.0,317.1 163.0,314.6 164.0,311.6 165.0,308.4 166.0,304.8 167.0,301.0 168.0,297.0 169.0,292.8 170.0,288.5 171.0,284.1 172.0,279.7 173.0,275.3 174.0,271.1 175.0,267.0 176.0,263.1 177.0,259.4 178.0,256.0 179.0,253.0 180.0,250.3 181.0,248.0 182.0,246.1 183.0,244.7 184.0,243.7 185.0,243.3 186.0,243.3 187.0,243.7 188.0,244.7 189.0,246.1 190.0,248.0 191.0,250.3 192.0,253.0 193.0,256.0 194.0,259.4 195.0,263.1 196.0,267.0 197.0,271.1 198.0,275.3 199.0,279.7 200.0,284.1 201.0,288.5 202.0,292.8 203.0,297.0 204.0,301.0 205.0,304.8 206.0,308.4 207.0,311.6 208.0,314.6 209.0,317.1 210.0,319.2 211.0,320.9 212.0,322.1 213.0,322.9 214.0,323.2 215.0,323.0 216.0,322.3 217.0,321.2 218.0,319.6 219.0,317.5 220.0,315.1 221.0,312.3 222.0,309.1 223.0,305.6 224.0,301.8 225.0,297.8 226.0,293.6 227.0,289.3 228.0,285.0 229.0,280.6 230.0,276.2 231.0,271.9 232.0,267.8 233.0,263.8 234.0,260.1 235.0,256.7 236.0,253.6 237.0,250.8 238.0,248.4 239.0,246.5 240.0,244.9 241.0,243.9 242.0,243.3 243.0,243.2 244.0,243.6 245.0,244.5 246.0,245.8 247.0,247.6 248.0,249.8 249.0,252.4 250.0,255.4 251.0,258.7 252.0,262.3 253.0,266.2 254.0,270.3 255.0,274.5 256.0,278.8 257.0,283.2 258.0,287.6 259.0,291.9 260.0,296.1 261.0,300.2 262.0,304.1 263.0,307.7 264.0,311.0 265.0,314.0 266.0,316.6 267.0,318.8 268.0,320.6 269.0,321.9 270.0,322.8 271.0,323.2 272.0,323.1 273.0,322.5 274.0,321.5 275.0,319.9 276.0,318.0 277.0,315.6 278.0,312.8 279.0,309.7 280.0,306.3 281.0,302.6 282.0,298.6 283.0,294.5 284.0,290.2 285.0,285.8 286.0,281.4 287.0,277.1 288.0,272.8 289.0,268.6 290.0,264.6 291.0,260.8 292.0,257.3 293.0,254.1 294.0,251.3 295.0,248.9 296.0,246.8 297.0,245.2 298.0,244.1 299.0,243.4 300.0,243.2 301.0,243.5 302.0,244.3 303.0,245.5 304.0,247.2 305.0,249.3 306.0,251.8 307.0,254.8 308.0,258.0 309.0,261.6 310.0,265.4 311.0,269.4 312.0,273.6 313.0,277.9 314.0,282.3 315.0,286.7 316.0,291.1 317.0,295.3 318.0,299.4 319.0,303.3 320.0,307.0 321.0,310.4 322.0,313.4 323.0,316.1 324.0,318.4 325.0,320.3 326.0,321.7 327.0,322.7 328.0,323.1 329.0,323.1 330.0,322.7 331.0,321.7 332.0,320.3 333.0,318.4 334.0,316.1 335.0,313.4 336.0,310.4 337.0,307.0 338.0,303.3 339.0,299.4 340.0,295.3 341.0,291.1 342.0,286.7 343.0,282.3 344.0,277.9 345.0,273.6 346.0,269.4 347.0,265.4 348.0,261.6 349.0,258.0 350.0,254.8 351.0,251.8 352.0,249.3 353.0,247.2 354.0,245.5 355.0,244.3 356.0,243.5 357.0,243.2 358.0,243.4 359.0,244.1 360.0,245.2 361.0,246.8 362.0,248.9 363.0,251.3 364.0,254.1 365.0,257.3 366.0,260.8 367.0,264.6 368.0,268.6 369.0,272.8 370.0,277.1 371.0,281.4 372.0,285.8 373.0,290.2 374.0,294.5 375.0,298.6 376.0,302.6 377.0,306.3 378.0,309.7 379.0,312.8 380.0,315.6 381.0,318.0 382.0,319.9 383.0,321.5 384.0,322.5 385.0,323.1 386.0,323.2 387.0,322.8 388.0,321.9 389.0,320.6 390.0,318.8 391.0,316.6 392.0,314.0 393.0,311.0 394.0,307.7 395.0,304.1 396.0,300.2 397.0,296.1 398.0,291.9 399.0,287.6 400.0,283.2 401.0,278.8 402.0,274.5 403.0,270.3 404.0,266.2 405.0,262.3 406.0,258.7 407.0,255.4 408.0,252.4 409.0,249.8 410.0,247.6 411.0,245.8 412.0,244.5 413.0,243.6 414.0,243.2 415.0,243.3 416.0,243.9 417.0,244.9 418.0,246.5 419.0,248.4 420.0,250.8 421.0,253.6 422.0,256.7 423.0,260.1 424.0,263.8 425.0,267.8 426.0,271.9 427.0,276.2 428.0,280.6 429.0,285.0 430.0,289.3 431.0,293.6 432.0,297.8 433.0,301.8 434.0,305.6 435.0,309.1 436.0,312.3 437.0,315.1 438.0,317.5 439.0,319.6 440.0,321.2 441.0,322.3 442.0,323.0 443.0,323.2 444.0,322.9 445.0,322.1 446.0,320.9 447.0,319.2 448.0,317.1 449.0,314.6 450.0,311.6 451.0,308.4 452.0,304.8 453.0,301.0 454.0,297.0 455.0,292.8 456.0,288.5 457.0,284.1 458.0,279.7 459.0,275.3 460.0,271.1 461.0,267.0 462.0,263.1 463.0,259.4 464.0,256.0 465.0,253.0 466.0,250.3 467.0,248.0 468.0,246.1 469.0,244.7 470.0,243.7 471.0,243.3 472.0,243.3 473.0,243.7 474.0,244.7 475.0,246.1 476.0,248.0 477.0,250.3 478.0,253.0 479.0,256.0 480.0,259.4 481.0,263.1 482.0,267.0 483.0,271.1 484.0,275.3 485.0,279.7 486.0,284.1 487.0,288.5 488.0,292.8 489.0,297.0 490.0,301.0 491.0,304.8 492.0,308.4 493.0,311.6 494.0,314.6 495.0,317.1 496.0,319.2 497.0,320.9 498.0,322.1 499.0,322.9 500.0,323.2 501.0,323.0 502.0,322.3 503.0,321.2 504.0,319.6 505.0,317.5 506.0,315.1 507.0,312.3 508.0,309.1 509.0,305.6 510.0,301.8 511.0,297.8 512.0,293.6 513.0,289.3 514.0,285.0 515.0,280.6 516.0,276.2 517.0,271.9 518.0,267.8 519.0,263.8 520.0,260.1 521.0,256.7 522.0,253.6 523.0,250.8 524.0,248.4 525.0,246.5 526.0,244.9 527.0,243.9 528.0,243.3 529.0,243.2 530.0,243.6 531.0,244.5 532.0,245.8 533.0,247.6 534.0,249.8 535.0,252.4 536.0,255.4 537.0,258.7 538.0,262.3 539.0,266.2 540.0,270.3 541.0,274.5 542.0,278.8 543.0,283.2 544.0,287.6 545.0,291.9 546.0,296.1 547.0,300.2 548.0,304.1 549.0,307.7 550.0,311.0 551.0,314.0 552.0,316.6 553.0,318.8 554.0,320.6 555.0,321.9 556.0,322.8 557.0,323.2 558.0,323.1 559.0,322.5 560.0,321.5 561.0,319.9 562.0,318.0 563.0,315.6 564.0,312.8 565.0,309.7 566.0,306.3 567.0,302.6 568.0,298.6 569.0,294.5 570.0,290.2 571.0,285.8 572.0,281.4 573.0,277.1 574.0,272.8 575.0,268.6 576.0,264.6 577.0,260.8 578.0,257.3 579.0,254.1 580.0,251.3 581.0,248.9 582.0,246.8 583.0,245.2 584.0,244.1 585.0,243.4 586.0,243.2 587.0,243.5 588.0,244.3 589.0,245.5 590.0,247.2 591.0,249.3 592.0,251.8 593.0,254.8 594.0,258.0 595.0,261.6 596.0,265.4 597.0,269.4 598.0,273.6 599.0,277.9 600.0,282.3 601.0,286.7 602.0,291.1 603.0,295.3 604.0,299.4 605.0,303.3 606.0,307.0 607.0,310.4 608.0,313.4 609.0,316.1 610.0,318.4 611.0,320.3 612.0,321.7 613.0,322.7 614.0,323.1 615.0,323.1 616.0,322.7 617.0,321.7 618.0,320.3 619.0,318.4 620.0,316.1 621.0,313.4 622.0,310.4 623.0,307.0 624.0,303.3 625.0,299.4 626.0,295.3 627.0,291.1 628.0,286.7 629.0,282.3 630.0,277.9 631.0,273.6 632.0,269.4 633.0,265.4 634.0,261.6 635.0,258.0 636.0,254.8 637.0,251.8 638.0,249.3 639.0,247.2 640.0,245.5 641.0,244.3 642.0,243.5 643.0,243.2 644.0,243.4 645.0,244.1 646.0,245.2 647.0,246.8 648.0,248.9 649.0,251.3 650.0,254.1 651.0,257.3 652.0,260.8 653.0,264.6 654.0,268.6 655.0,272.8 656.0,277.1 657.0,281.4 658.0,285.8 659.0,290.2 660.0,294.5 661.0,298.6 662.0,302.6 663.0,306.3 664.0,309.7 665.0,312.8 666.0,315.6 667.0,318.0 668.0,319.9" fill="none" stroke="#E03A3A" stroke-width="1.3"/><polyline points="82.0,242.6 83.0,241.4 84.0,240.8 85.0,240.6 86.0,241.0 87.0,241.8 88.0,243.2 89.0,245.1 90.0,247.4 91.0,250.2 92.0,253.4 93.0,256.9 94.0,260.8 95.0,264.9 96.0,269.2 97.0,273.8 98.0,278.4 99.0,283.1 100.0,287.8 101.0,292.5 102.0,297.1 103.0,301.5 104.0,305.6 105.0,309.6 106.0,313.2 107.0,316.4 108.0,319.3 109.0,321.7 110.0,323.6 111.0,325.1 112.0,326.1 113.0,326.6 114.0,326.5 115.0,325.9 116.0,324.9 117.0,323.3 118.0,321.2 119.0,318.7 120.0,315.8 121.0,312.5 122.0,308.8 123.0,304.8 124.0,300.6 125.0,296.2 126.0,291.6 127.0,286.9 128.0,282.2 129.0,277.5 130.0,272.9 131.0,268.4 132.0,264.0 133.0,260.0 134.0,256.2 135.0,252.7 136.0,249.6 137.0,246.9 138.0,244.7 139.0,242.9 140.0,241.6 141.0,240.9 142.0,240.6 143.0,240.9 144.0,241.6 145.0,242.9 146.0,244.7 147.0,246.9 148.0,249.6 149.0,252.7 150.0,256.2 151.0,260.0 152.0,264.0 153.0,268.4 154.0,272.9 155.0,277.5 156.0,282.2 157.0,286.9 158.0,291.6 159.0,296.2 160.0,300.6 161.0,304.8 162.0,308.8 163.0,312.5 164.0,315.8 165.0,318.7 166.0,321.2 167.0,323.3 168.0,324.9 169.0,325.9 170.0,326.5 171.0,326.6 172.0,326.1 173.0,325.1 174.0,323.6 175.0,321.7 176.0,319.3 177.0,316.4 178.0,313.2 179.0,309.6 180.0,305.6 181.0,301.5 182.0,297.1 183.0,292.5 184.0,287.8 185.0,283.1 186.0,278.4 187.0,273.8 188.0,269.2 189.0,264.9 190.0,260.8 191.0,256.9 192.0,253.4 193.0,250.2 194.0,247.4 195.0,245.1 196.0,243.2 197.0,241.8 198.0,241.0 199.0,240.6 200.0,240.8 201.0,241.4 202.0,242.6 203.0,244.3 204.0,246.4 205.0,249.0 206.0,252.0 207.0,255.4 208.0,259.2 209.0,263.2 210.0,267.5 211.0,271.9 212.0,276.5 213.0,281.2 214.0,286.0 215.0,290.7 216.0,295.3 217.0,299.7 218.0,304.0 219.0,308.0 220.0,311.8 221.0,315.2 222.0,318.2 223.0,320.8 224.0,322.9 225.0,324.6 226.0,325.8 227.0,326.4 228.0,326.6 229.0,326.2 230.0,325.4 231.0,324.0 232.0,322.1 233.0,319.8 234.0,317.0 235.0,313.8 236.0,310.3 237.0,306.4 238.0,302.3 239.0,298.0 240.0,293.4 241.0,288.8 242.0,284.1 243.0,279.4 244.0,274.7 245.0,270.1 246.0,265.7 247.0,261.6 248.0,257.6 249.0,254.0 250.0,250.8 251.0,247.9 252.0,245.5 253.0,243.6 254.0,242.1 255.0,241.1 256.0,240.6 257.0,240.7 258.0,241.3 259.0,242.3 260.0,243.9 261.0,246.0 262.0,248.5 263.0,251.4 264.0,254.7 265.0,258.4 266.0,262.4 267.0,266.6 268.0,271.0 269.0,275.6 270.0,280.3 271.0,285.0 272.0,289.7 273.0,294.3 274.0,298.8 275.0,303.2 276.0,307.2 277.0,311.0 278.0,314.5 279.0,317.6 280.0,320.3 281.0,322.5 282.0,324.3 283.0,325.6 284.0,326.3 285.0,326.6 286.0,326.3 287.0,325.6 288.0,324.3 289.0,322.5 290.0,320.3 291.0,317.6 292.0,314.5 293.0,311.0 294.0,307.2 295.0,303.2 296.0,298.8 297.0,294.3 298.0,289.7 299.0,285.0 300.0,280.3 301.0,275.6 302.0,271.0 303.0,266.6 304.0,262.4 305.0,258.4 306.0,254.7 307.0,251.4 308.0,248.5 309.0,246.0 310.0,243.9 311.0,242.3 312.0,241.3 313.0,240.7 314.0,240.6 315.0,241.1 316.0,242.1 317.0,243.6 318.0,245.5 319.0,247.9 320.0,250.8 321.0,254.0 322.0,257.6 323.0,261.6 324.0,265.7 325.0,270.1 326.0,274.7 327.0,279.4 328.0,284.1 329.0,288.8 330.0,293.4 331.0,298.0 332.0,302.3 333.0,306.4 334.0,310.3 335.0,313.8 336.0,317.0 337.0,319.8 338.0,322.1 339.0,324.0 340.0,325.4 341.0,326.2 342.0,326.6 343.0,326.4 344.0,325.8 345.0,324.6 346.0,322.9 347.0,320.8 348.0,318.2 349.0,315.2 350.0,311.8 351.0,308.0 352.0,304.0 353.0,299.7 354.0,295.3 355.0,290.7 356.0,286.0 357.0,281.2 358.0,276.5 359.0,271.9 360.0,267.5 361.0,263.2 362.0,259.2 363.0,255.4 364.0,252.0 365.0,249.0 366.0,246.4 367.0,244.3 368.0,242.6 369.0,241.4 370.0,240.8 371.0,240.6 372.0,241.0 373.0,241.8 374.0,243.2 375.0,245.1 376.0,247.4 377.0,250.2 378.0,253.4 379.0,256.9 380.0,260.8 381.0,264.9 382.0,269.2 383.0,273.8 384.0,278.4 385.0,283.1 386.0,287.8 387.0,292.5 388.0,297.1 389.0,301.5 390.0,305.6 391.0,309.6 392.0,313.2 393.0,316.4 394.0,319.3 395.0,321.7 396.0,323.6 397.0,325.1 398.0,326.1 399.0,326.6 400.0,326.5 401.0,325.9 402.0,324.9 403.0,323.3 404.0,321.2 405.0,318.7 406.0,315.8 407.0,312.5 408.0,308.8 409.0,304.8 410.0,300.6 411.0,296.2 412.0,291.6 413.0,286.9 414.0,282.2 415.0,277.5 416.0,272.9 417.0,268.4 418.0,264.0 419.0,260.0 420.0,256.2 421.0,252.7 422.0,249.6 423.0,246.9 424.0,244.7 425.0,242.9 426.0,241.6 427.0,240.9 428.0,240.6 429.0,240.9 430.0,241.6 431.0,242.9 432.0,244.7 433.0,246.9 434.0,249.6 435.0,252.7 436.0,256.2 437.0,260.0 438.0,264.0 439.0,268.4 440.0,272.9 441.0,277.5 442.0,282.2 443.0,286.9 444.0,291.6 445.0,296.2 446.0,300.6 447.0,304.8 448.0,308.8 449.0,312.5 450.0,315.8 451.0,318.7 452.0,321.2 453.0,323.3 454.0,324.9 455.0,325.9 456.0,326.5 457.0,326.6 458.0,326.1 459.0,325.1 460.0,323.6 461.0,321.7 462.0,319.3 463.0,316.4 464.0,313.2 465.0,309.6 466.0,305.6 467.0,301.5 468.0,297.1 469.0,292.5 470.0,287.8 471.0,283.1 472.0,278.4 473.0,273.8 474.0,269.2 475.0,264.9 476.0,260.8 477.0,256.9 478.0,253.4 479.0,250.2 480.0,247.4 481.0,245.1 482.0,243.2 483.0,241.8 484.0,241.0 485.0,240.6 486.0,240.8 487.0,241.4 488.0,242.6 489.0,244.3 490.0,246.4 491.0,249.0 492.0,252.0 493.0,255.4 494.0,259.2 495.0,263.2 496.0,267.5 497.0,271.9 498.0,276.5 499.0,281.2 500.0,286.0 501.0,290.7 502.0,295.3 503.0,299.7 504.0,304.0 505.0,308.0 506.0,311.8 507.0,315.2 508.0,318.2 509.0,320.8 510.0,322.9 511.0,324.6 512.0,325.8 513.0,326.4 514.0,326.6 515.0,326.2 516.0,325.4 517.0,324.0 518.0,322.1 519.0,319.8 520.0,317.0 521.0,313.8 522.0,310.3 523.0,306.4 524.0,302.3 525.0,298.0 526.0,293.4 527.0,288.8 528.0,284.1 529.0,279.4 530.0,274.7 531.0,270.1 532.0,265.7 533.0,261.6 534.0,257.6 535.0,254.0 536.0,250.8 537.0,247.9 538.0,245.5 539.0,243.6 540.0,242.1 541.0,241.1 542.0,240.6 543.0,240.7 544.0,241.3 545.0,242.3 546.0,243.9 547.0,246.0 548.0,248.5 549.0,251.4 550.0,254.7 551.0,258.4 552.0,262.4 553.0,266.6 554.0,271.0 555.0,275.6 556.0,280.3 557.0,285.0 558.0,289.7 559.0,294.3 560.0,298.8 561.0,303.2 562.0,307.2 563.0,311.0 564.0,314.5 565.0,317.6 566.0,320.3 567.0,322.5 568.0,324.3 569.0,325.6 570.0,326.3 571.0,326.6 572.0,326.3 573.0,325.6 574.0,324.3 575.0,322.5 576.0,320.3 577.0,317.6 578.0,314.5 579.0,311.0 580.0,307.2 581.0,303.2 582.0,298.8 583.0,294.3 584.0,289.7 585.0,285.0 586.0,280.3 587.0,275.6 588.0,271.0 589.0,266.6 590.0,262.4 591.0,258.4 592.0,254.7 593.0,251.4 594.0,248.5 595.0,246.0 596.0,243.9 597.0,242.3 598.0,241.3 599.0,240.7 600.0,240.6 601.0,241.1 602.0,242.1 603.0,243.6 604.0,245.5 605.0,247.9 606.0,250.8 607.0,254.0 608.0,257.6 609.0,261.6 610.0,265.7 611.0,270.1 612.0,274.7 613.0,279.4 614.0,284.1 615.0,288.8 616.0,293.4 617.0,298.0 618.0,302.3 619.0,306.4 620.0,310.3 621.0,313.8 622.0,317.0 623.0,319.8 624.0,322.1 625.0,324.0 626.0,325.4 627.0,326.2 628.0,326.6 629.0,326.4 630.0,325.8 631.0,324.6 632.0,322.9 633.0,320.8 634.0,318.2 635.0,315.2 636.0,311.8 637.0,308.0 638.0,304.0 639.0,299.7 640.0,295.3 641.0,290.7 642.0,286.0 643.0,281.2 644.0,276.5 645.0,271.9 646.0,267.5 647.0,263.2 648.0,259.2 649.0,255.4 650.0,252.0 651.0,249.0 652.0,246.4 653.0,244.3 654.0,242.6 655.0,241.4 656.0,240.8 657.0,240.6 658.0,241.0 659.0,241.8 660.0,243.2 661.0,245.1 662.0,247.4 663.0,250.2 664.0,253.4 665.0,256.9 666.0,260.8 667.0,264.9 668.0,269.2" fill="none" stroke="#2A32D0" stroke-width="1.3"/><rect x="80" y="163" width="2" height="233" fill="#222"/><rect x="80" y="163" width="588" height="2" fill="#111"/><line x1="66" y1="164.0" x2="80" y2="164.0" stroke="#333" stroke-width="1.3"/><line x1="73" y1="168.6" x2="80" y2="168.6" stroke="#333" stroke-width="1.3"/><line x1="73" y1="173.3" x2="80" y2="173.3" stroke="#333" stroke-width="1.3"/><line x1="73" y1="177.9" x2="80" y2="177.9" stroke="#333" stroke-width="1.3"/><line x1="73" y1="182.6" x2="80" y2="182.6" stroke="#333" stroke-width="1.3"/><line x1="66" y1="187.2" x2="80" y2="187.2" stroke="#333" stroke-width="1.3"/><line x1="73" y1="191.8" x2="80" y2="191.8" stroke="#333" stroke-width="1.3"/><line x1="73" y1="196.5" x2="80" y2="196.5" stroke="#333" stroke-width="1.3"/><line x1="73" y1="201.1" x2="80" y2="201.1" stroke="#333" stroke-width="1.3"/><line x1="73" y1="205.8" x2="80" y2="205.8" stroke="#333" stroke-width="1.3"/><line x1="66" y1="210.4" x2="80" y2="210.4" stroke="#333" stroke-width="1.3"/><line x1="73" y1="215.0" x2="80" y2="215.0" stroke="#333" stroke-width="1.3"/><line x1="73" y1="219.7" x2="80" y2="219.7" stroke="#333" stroke-width="1.3"/><line x1="73" y1="224.3" x2="80" y2="224.3" stroke="#333" stroke-width="1.3"/><line x1="73" y1="229.0" x2="80" y2="229.0" stroke="#333" stroke-width="1.3"/><line x1="66" y1="233.6" x2="80" y2="233.6" stroke="#333" stroke-width="1.3"/><line x1="73" y1="238.2" x2="80" y2="238.2" stroke="#333" stroke-width="1.3"/><line x1="73" y1="242.9" x2="80" y2="242.9" stroke="#333" stroke-width="1.3"/><line x1="73" y1="247.5" x2="80" y2="247.5" stroke="#333" stroke-width="1.3"/><line x1="73" y1="252.2" x2="80" y2="252.2" stroke="#333" stroke-width="1.3"/><line x1="66" y1="256.8" x2="80" y2="256.8" stroke="#333" stroke-width="1.3"/><line x1="73" y1="261.4" x2="80" y2="261.4" stroke="#333" stroke-width="1.3"/><line x1="73" y1="266.1" x2="80" y2="266.1" stroke="#333" stroke-width="1.3"/><line x1="73" y1="270.7" x2="80" y2="270.7" stroke="#333" stroke-width="1.3"/><line x1="73" y1="275.4" x2="80" y2="275.4" stroke="#333" stroke-width="1.3"/><line x1="66" y1="280.0" x2="80" y2="280.0" stroke="#333" stroke-width="1.3"/><line x1="73" y1="284.6" x2="80" y2="284.6" stroke="#333" stroke-width="1.3"/><line x1="73" y1="289.3" x2="80" y2="289.3" stroke="#333" stroke-width="1.3"/><line x1="73" y1="293.9" x2="80" y2="293.9" stroke="#333" stroke-width="1.3"/><line x1="73" y1="298.6" x2="80" y2="298.6" stroke="#333" stroke-width="1.3"/><line x1="66" y1="303.2" x2="80" y2="303.2" stroke="#333" stroke-width="1.3"/><line x1="73" y1="307.8" x2="80" y2="307.8" stroke="#333" stroke-width="1.3"/><line x1="73" y1="312.5" x2="80" y2="312.5" stroke="#333" stroke-width="1.3"/><line x1="73" y1="317.1" x2="80" y2="317.1" stroke="#333" stroke-width="1.3"/><line x1="73" y1="321.8" x2="80" y2="321.8" stroke="#333" stroke-width="1.3"/><line x1="66" y1="326.4" x2="80" y2="326.4" stroke="#333" stroke-width="1.3"/><line x1="73" y1="331.0" x2="80" y2="331.0" stroke="#333" stroke-width="1.3"/><line x1="73" y1="335.7" x2="80" y2="335.7" stroke="#333" stroke-width="1.3"/><line x1="73" y1="340.3" x2="80" y2="340.3" stroke="#333" stroke-width="1.3"/><line x1="73" y1="345.0" x2="80" y2="345.0" stroke="#333" stroke-width="1.3"/><line x1="66" y1="349.6" x2="80" y2="349.6" stroke="#333" stroke-width="1.3"/><line x1="73" y1="354.2" x2="80" y2="354.2" stroke="#333" stroke-width="1.3"/><line x1="73" y1="358.9" x2="80" y2="358.9" stroke="#333" stroke-width="1.3"/><line x1="73" y1="363.5" x2="80" y2="363.5" stroke="#333" stroke-width="1.3"/><line x1="73" y1="368.2" x2="80" y2="368.2" stroke="#333" stroke-width="1.3"/><line x1="66" y1="372.8" x2="80" y2="372.8" stroke="#333" stroke-width="1.3"/><line x1="73" y1="377.4" x2="80" y2="377.4" stroke="#333" stroke-width="1.3"/><line x1="73" y1="382.1" x2="80" y2="382.1" stroke="#333" stroke-width="1.3"/><line x1="73" y1="386.7" x2="80" y2="386.7" stroke="#333" stroke-width="1.3"/><line x1="73" y1="391.4" x2="80" y2="391.4" stroke="#333" stroke-width="1.3"/><line x1="66" y1="396.0" x2="80" y2="396.0" stroke="#333" stroke-width="1.3"/><line x1="83.0" y1="397" x2="83.0" y2="412" stroke="#333" stroke-width="1.4"/><line x1="94.7" y1="397" x2="94.7" y2="404" stroke="#333" stroke-width="1.4"/><line x1="106.4" y1="397" x2="106.4" y2="404" stroke="#333" stroke-width="1.4"/><line x1="118.1" y1="397" x2="118.1" y2="404" stroke="#333" stroke-width="1.4"/><line x1="129.8" y1="397" x2="129.8" y2="404" stroke="#333" stroke-width="1.4"/><line x1="141.5" y1="397" x2="141.5" y2="412" stroke="#333" stroke-width="1.4"/><line x1="153.2" y1="397" x2="153.2" y2="404" stroke="#333" stroke-width="1.4"/><line x1="164.9" y1="397" x2="164.9" y2="404" stroke="#333" stroke-width="1.4"/><line x1="176.6" y1="397" x2="176.6" y2="404" stroke="#333" stroke-width="1.4"/><line x1="188.3" y1="397" x2="188.3" y2="404" stroke="#333" stroke-width="1.4"/><line x1="200.0" y1="397" x2="200.0" y2="412" stroke="#333" stroke-width="1.4"/><line x1="211.7" y1="397" x2="211.7" y2="404" stroke="#333" stroke-width="1.4"/><line x1="223.4" y1="397" x2="223.4" y2="404" stroke="#333" stroke-width="1.4"/><line x1="235.1" y1="397" x2="235.1" y2="404" stroke="#333" stroke-width="1.4"/><line x1="246.8" y1="397" x2="246.8" y2="404" stroke="#333" stroke-width="1.4"/><line x1="258.5" y1="397" x2="258.5" y2="412" stroke="#333" stroke-width="1.4"/><line x1="270.2" y1="397" x2="270.2" y2="404" stroke="#333" stroke-width="1.4"/><line x1="281.9" y1="397" x2="281.9" y2="404" stroke="#333" stroke-width="1.4"/><line x1="293.6" y1="397" x2="293.6" y2="404" stroke="#333" stroke-width="1.4"/><line x1="305.3" y1="397" x2="305.3" y2="404" stroke="#333" stroke-width="1.4"/><line x1="317.0" y1="397" x2="317.0" y2="412" stroke="#333" stroke-width="1.4"/><line x1="328.7" y1="397" x2="328.7" y2="404" stroke="#333" stroke-width="1.4"/><line x1="340.4" y1="397" x2="340.4" y2="404" stroke="#333" stroke-width="1.4"/><line x1="352.1" y1="397" x2="352.1" y2="404" stroke="#333" stroke-width="1.4"/><line x1="363.8" y1="397" x2="363.8" y2="404" stroke="#333" stroke-width="1.4"/><line x1="375.5" y1="397" x2="375.5" y2="412" stroke="#333" stroke-width="1.4"/><line x1="387.2" y1="397" x2="387.2" y2="404" stroke="#333" stroke-width="1.4"/><line x1="398.9" y1="397" x2="398.9" y2="404" stroke="#333" stroke-width="1.4"/><line x1="410.6" y1="397" x2="410.6" y2="404" stroke="#333" stroke-width="1.4"/><line x1="422.3" y1="397" x2="422.3" y2="404" stroke="#333" stroke-width="1.4"/><line x1="434.0" y1="397" x2="434.0" y2="412" stroke="#333" stroke-width="1.4"/><line x1="445.7" y1="397" x2="445.7" y2="404" stroke="#333" stroke-width="1.4"/><line x1="457.4" y1="397" x2="457.4" y2="404" stroke="#333" stroke-width="1.4"/><line x1="469.1" y1="397" x2="469.1" y2="404" stroke="#333" stroke-width="1.4"/><line x1="480.8" y1="397" x2="480.8" y2="404" stroke="#333" stroke-width="1.4"/><line x1="492.5" y1="397" x2="492.5" y2="412" stroke="#333" stroke-width="1.4"/><line x1="504.2" y1="397" x2="504.2" y2="404" stroke="#333" stroke-width="1.4"/><line x1="515.9" y1="397" x2="515.9" y2="404" stroke="#333" stroke-width="1.4"/><line x1="527.6" y1="397" x2="527.6" y2="404" stroke="#333" stroke-width="1.4"/><line x1="539.3" y1="397" x2="539.3" y2="404" stroke="#333" stroke-width="1.4"/><line x1="551.0" y1="397" x2="551.0" y2="412" stroke="#333" stroke-width="1.4"/><line x1="562.7" y1="397" x2="562.7" y2="404" stroke="#333" stroke-width="1.4"/><line x1="574.4" y1="397" x2="574.4" y2="404" stroke="#333" stroke-width="1.4"/><line x1="586.1" y1="397" x2="586.1" y2="404" stroke="#333" stroke-width="1.4"/><line x1="597.8" y1="397" x2="597.8" y2="404" stroke="#333" stroke-width="1.4"/><line x1="609.5" y1="397" x2="609.5" y2="412" stroke="#333" stroke-width="1.4"/><line x1="621.2" y1="397" x2="621.2" y2="404" stroke="#333" stroke-width="1.4"/><line x1="632.9" y1="397" x2="632.9" y2="404" stroke="#333" stroke-width="1.4"/><line x1="644.6" y1="397" x2="644.6" y2="404" stroke="#333" stroke-width="1.4"/><line x1="656.3" y1="397" x2="656.3" y2="404" stroke="#333" stroke-width="1.4"/><line x1="668.0" y1="397" x2="668.0" y2="412" stroke="#333" stroke-width="1.4"/></svg>
<div class="t" style="left:0px;top:158px;font-size:13px;color:#222;width:61px;text-align:right;letter-spacing:-0.4px">4500.0</div>
<div class="t" style="left:0px;top:274px;font-size:13px;color:#222;width:61px;text-align:right">0</div>
<div class="t" style="left:0px;top:390px;font-size:13px;color:#222;width:61px;text-align:right;letter-spacing:-0.4px">-4500.0</div>
<div class="t" style="left:82px;top:418px;font-size:13px;color:#222;letter-spacing:-0.3px">0.0 msec</div>
<div class="t" style="left:296px;top:427px;font-size:13px;color:#222;">12.500 msec/Div</div>
<div class="a" style="left:678px;top:115px;width:215px;height:330px;border:1px solid #788A8F;box-shadow:inset 1px 1px #FAFBFA,1px 1px #FAFBFA"></div>
<div class="a" style="left:688px;top:131px;width:92px;height:113px;border:1px solid #788A8F;box-shadow:inset 1px 1px #FAFBFA,1px 1px #FAFBFA"></div>
<div class="a" style="left:790px;top:131px;width:93px;height:113px;border:1px solid #788A8F;box-shadow:inset 1px 1px #FAFBFA,1px 1px #FAFBFA"></div>
<div class="t" style="left:697px;top:125px;font-size:13px;color:#E83838;background:#D8DCD6;padding:0 1px">Channel X</div>
<div class="t" style="left:800px;top:125px;font-size:13px;color:#3030D0;background:#D8DCD6;padding:0 1px">Channel Y</div>
<div class="t" style="left:707px;top:144px;font-size:13px;color:#222;letter-spacing:-0.6px">OFFSET</div>
<div class="sk" style="left:704px;top:161px;width:47px;height:22px;background:#D8DCD6;"></div>
<div class="t" style="left:707px;top:165px;font-size:13px;color:#333;">0</div>
<div class="rb" style="left:754px;top:161px;width:18px;height:11px;"></div>
<div class="rb" style="left:754px;top:172px;width:18px;height:11px;"></div>
<svg class="a" style="left:754px;top:161px" width="18" height="22"><path d="M7 7 L11 7 L9 4.5Z M7 15 L11 15 L9 17.5Z" fill="#111"/></svg>
<div class="t" style="left:726px;top:190px;font-size:13px;color:#222;background:#fff;padding:0 1px">AC</div>
<div class="t" style="left:809px;top:144px;font-size:13px;color:#222;letter-spacing:-0.6px">OFFSET</div>
<div class="sk" style="left:806px;top:161px;width:47px;height:22px;background:#D8DCD6;"></div>
<div class="t" style="left:809px;top:165px;font-size:13px;color:#333;">0</div>
<div class="rb" style="left:856px;top:161px;width:18px;height:11px;"></div>
<div class="rb" style="left:856px;top:172px;width:18px;height:11px;"></div>
<svg class="a" style="left:856px;top:161px" width="18" height="22"><path d="M7 7 L11 7 L9 4.5Z M7 15 L11 15 L9 17.5Z" fill="#111"/></svg>
<div class="t" style="left:828px;top:190px;font-size:13px;color:#222;background:#fff;padding:0 1px">AC</div>
<div class="rb" style="left:696px;top:208px;width:75px;height:25px;"></div><div class="t" style="left:696px;top:208px;width:75px;height:25px;display:flex;align-items:center;justify-content:center;font-size:13px;color:#111;">DC/AC</div>
<div class="a" style="left:800px;top:208px;width:75px;height:25px;background:#D8DCD6;border:1px solid #111;box-shadow:inset -1px -1px #2C383C,inset 1px 1px #FAFBFA,inset -2px -2px #788A8F,inset 2px 2px #E6E8E4"></div><div class="a" style="left:805px;top:212px;width:65px;height:17px;border:1px dotted #333"></div><div class="t" style="left:800px;top:208px;width:75px;height:25px;display:flex;align-items:center;justify-content:center;font-size:13px;color:#111;">DC/AC</div>
<div class="a" style="left:688px;top:253px;width:195px;height:48px;border:1px solid #788A8F;box-shadow:inset 1px 1px #FAFBFA,1px 1px #FAFBFA"></div>
<div class="t" style="left:697px;top:247px;font-size:13px;color:#A0A8A8;background:#D8DCD6;padding:0 1px;text-shadow:1px 1px #fff;letter-spacing:-0.4px">Retrieve memory data</div>
<div class="a" style="left:696px;top:267px;width:179px;height:18px;background:#fff"></div>
<div class="rb" style="left:696px;top:267px;width:18px;height:18px;"></div>
<div class="rb" style="left:857px;top:267px;width:18px;height:18px;"></div>
<svg class="a" style="left:696px;top:267px" width="179" height="18"><path d="M7 9 L11 5 L11 13Z M172 9 L168 5 L168 13Z" fill="#888"/></svg>
<div class="t" style="left:704px;top:324px;font-size:13px;color:#333;">x1</div>
<div class="rb" style="left:725px;top:311px;width:18px;height:18px;"></div>
<div class="rb" style="left:725px;top:331px;width:18px;height:18px;"></div>
<svg class="a" style="left:725px;top:311px" width="18" height="38"><path d="M5 11 L13 11 L9 7Z M5 26 L13 26 L9 30Z" fill="#111"/></svg>
<div class="t" style="left:754px;top:323px;font-size:14px;color:#111;font-weight:bold;letter-spacing:0.7px">Zoom</div>
<div class="rb" style="left:809px;top:320px;width:18px;height:19px;"></div>
<div class="rb" style="left:827px;top:320px;width:18px;height:19px;"></div>
<svg class="a" style="left:809px;top:320px" width="36" height="19"><path d="M7 9.5 L11 5.5 L11 13.5Z M29 9.5 L25 5.5 L25 13.5Z" fill="#111"/></svg>
<div class="t" style="left:851px;top:324px;font-size:13px;color:#333;">x1</div>
<div class="rb" style="left:696px;top:358px;width:76px;height:26px;"></div><div class="t" style="left:696px;top:358px;width:76px;height:26px;display:flex;align-items:center;justify-content:center;font-size:15px;color:#111;font-weight:bold;">Trigger</div>
<div class="rb" style="left:696px;top:385px;width:76px;height:27px;"></div><div class="t" style="left:696px;top:385px;width:76px;height:27px;display:flex;align-items:center;justify-content:center;font-size:15px;color:#111;font-weight:bold;">S<u>a</u>ve</div>
<div class="rb" style="left:696px;top:413px;width:76px;height:27px;"></div><div class="t" style="left:696px;top:413px;width:76px;height:27px;display:flex;align-items:center;justify-content:center;font-size:15px;color:#8A9494;font-weight:bold;text-shadow:1px 1px #fff">Re<u>t</u>rieve</div>
<div class="rb" style="left:799px;top:358px;width:76px;height:26px;"></div><div class="t" style="left:799px;top:358px;width:76px;height:26px;display:flex;align-items:center;justify-content:center;font-size:15px;color:#111;font-weight:bold;"><u>H</u>old</div>
<div class="rb" style="left:799px;top:385px;width:76px;height:27px;"></div><div class="t" style="left:799px;top:385px;width:76px;height:27px;display:flex;align-items:center;justify-content:center;font-size:15px;color:#111;font-weight:bold;"><u>S</u>etup</div>
<div class="rb" style="left:799px;top:413px;width:76px;height:27px;"></div><div class="t" style="left:799px;top:413px;width:76px;height:27px;display:flex;align-items:center;justify-content:center;font-size:15px;color:#111;font-weight:bold;"><u>R</u>esize</div>
<div class="a" style="left:77px;top:471px;width:590px;height:69px;border:1px solid #788A8F;box-shadow:inset 1px 1px #FAFBFA,1px 1px #FAFBFA"></div>
<div class="t" style="left:87px;top:466px;font-size:13px;color:#9AA2A2;background:#D8DCD6;padding:0 1px;text-shadow:1px 1px #fff;letter-spacing:-0.35px">Position Offline</div>
<div class="t" style="left:95px;top:499px;font-size:22px;color:#6A787C;font-weight:bold;">X</div>
<div class="sk" style="left:120px;top:493px;width:93px;height:31px;background:#fff;"></div>
<div class="t" style="left:225px;top:499px;font-size:22px;color:#6A787C;font-weight:bold;">Y</div>
<div class="sk" style="left:251px;top:493px;width:94px;height:31px;background:#fff;"></div>
<div class="sk" style="left:387px;top:483px;width:75px;height:19px;background:#fff;"></div>
<div class="t" style="left:471px;top:486px;font-size:12px;color:#333;">msec</div>
<div class="a" style="left:368px;top:506px;width:141px;height:20px;background:#fff"></div>
<div class="rb" style="left:368px;top:506px;width:18px;height:20px;"></div>
<div class="rb" style="left:491px;top:506px;width:18px;height:20px;"></div>
<svg class="a" style="left:368px;top:506px" width="141" height="20"><path d="M7 10 L11 6 L11 14Z M134 10 L130 6 L130 14Z" fill="#888"/></svg>
<div class="sk" style="left:541px;top:490px;width:15px;height:15px;background:#D8DCD6;"></div>
<div class="sk" style="left:541px;top:511px;width:15px;height:15px;background:#D8DCD6;"></div>
<div class="t" style="left:562px;top:491px;font-size:13px;color:#9AA2A2;text-shadow:1px 1px #fff">ScopeData</div>
<div class="t" style="left:562px;top:512px;font-size:13px;color:#9AA2A2;text-shadow:1px 1px #fff">Auto Run</div>
<div class="a" style="left:677px;top:471px;width:215px;height:69px;border:1px solid #788A8F;box-shadow:inset 1px 1px #FAFBFA,1px 1px #FAFBFA"></div>
<div class="t" style="left:687px;top:466px;font-size:13px;color:#9AA2A2;background:#D8DCD6;padding:0 1px;text-shadow:1px 1px #fff">FFT</div>
<div class="rb" style="left:724px;top:496px;width:62px;height:22px;"></div><div class="t" style="left:724px;top:496px;width:62px;height:22px;display:flex;align-items:center;justify-content:center;font-size:14px;color:#555;">X</div>
<div class="rb" style="left:790px;top:496px;width:62px;height:22px;"></div><div class="t" style="left:790px;top:496px;width:62px;height:22px;display:flex;align-items:center;justify-content:center;font-size:14px;color:#555;">Y</div>
<div class="a" style="left:1181px;top:77px;width:19px;height:3px;background:#D8DCD6"></div>
<div class="a" style="left:1181px;top:80px;width:19px;height:768px;background:repeating-conic-gradient(#FAFBFA 0 25%,#D8DCD6 0 50%) 0 0/2px 2px"></div>
<div class="rb" style="left:1181px;top:80px;width:19px;height:16px;"></div>
<svg class="a" style="left:1181px;top:80px" width="19" height="16"><path d="M5 10 L14 10 L9.5 5Z" fill="#111"/></svg>
<div class="rb" style="left:1181px;top:96px;width:19px;height:708px;"></div>
<div class="rb" style="left:1181px;top:831px;width:19px;height:17px;"></div>
<svg class="a" style="left:1181px;top:831px" width="19" height="17"><path d="M5 6 L14 6 L9.5 11Z" fill="#111"/></svg>
<div class="a" style="left:0px;top:848px;width:1200px;height:19px;background:repeating-conic-gradient(#FAFBFA 0 25%,#D8DCD6 0 50%) 0 0/2px 2px"></div>
<div class="rb" style="left:0px;top:848px;width:18px;height:19px;"></div>
<svg class="a" style="left:0;top:848px" width="18" height="19"><path d="M6 9.5 L11 5 L11 14Z" fill="#111"/></svg>
<div class="rb" style="left:28px;top:848px;width:1117px;height:19px;"></div>
<div class="rb" style="left:1163px;top:848px;width:18px;height:19px;"></div>
<svg class="a" style="left:1163px;top:848px" width="18" height="19"><path d="M12 9.5 L7 5 L7 14Z" fill="#111"/></svg>
<div class="a" style="left:1181px;top:848px;width:19px;height:19px;background:#D8DCD6"></div>
<div class="a" style="left:0px;top:867px;width:1200px;height:5px;background:#D8DCD6"></div>
</body></html>
